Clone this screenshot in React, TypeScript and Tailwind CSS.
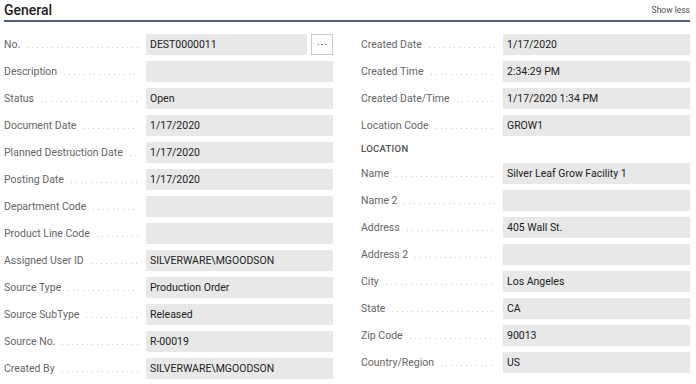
import React from "react";

type Field = { label: string; value?: string; more?: boolean };

const left: Field[] = [
  { label: "No.", value: "DEST0000011", more: true },
  { label: "Description" },
  { label: "Status", value: "Open" },
  { label: "Document Date", value: "1/17/2020" },
  { label: "Planned Destruction Date", value: "1/17/2020" },
  { label: "Posting Date", value: "1/17/2020" },
  { label: "Department Code" },
  { label: "Product Line Code" },
  { label: "Assigned User ID", value: "SILVERWARE\\MGOODSON" },
  { label: "Source Type", value: "Production Order" },
  { label: "Source SubType", value: "Released" },
  { label: "Source No.", value: "R-00019" },
  { label: "Created By", value: "SILVERWARE\\MGOODSON" },
];

const rightTop: Field[] = [
  { label: "Created Date", value: "1/17/2020" },
  { label: "Created Time", value: "2:34:29 PM" },
  { label: "Created Date/Time", value: "1/17/2020 1:34 PM" },
  { label: "Location Code", value: "GROW1" },
];

const rightBottom: Field[] = [
  { label: "Name", value: "Silver Leaf Grow Facility 1" },
  { label: "Name 2" },
  { label: "Address", value: "405 Wall St." },
  { label: "Address 2" },
  { label: "City", value: "Los Angeles" },
  { label: "State", value: "CA" },
  { label: "Zip Code", value: "90013" },
  { label: "Country/Region", value: "US" },
];

function Row({ f }: { f: Field }) {
  return (
    <div className="flex items-center h-[21px]">
      <div className="w-[142px] shrink-0 flex items-baseline pr-[8px] text-[10.5px] text-[#666666]">
        <span className="whitespace-nowrap">{f.label}</span>
        <span className="flex-1 ml-[7px] h-[1px] bg-[linear-gradient(to_right,#c4c4c4_1px,transparent_1px)] bg-[length:5px_1px] bg-repeat-x" />
      </div>
      <div className="flex-1 flex h-full gap-[4px]">
        <div className="flex-1 h-full bg-[#e8e8e8] flex items-center px-[4px] text-[10.5px] text-[#212121] whitespace-nowrap">
          {f.value}
        </div>
        {f.more && (
          <div className="w-[22px] h-full border border-[#c8c8c8] bg-white flex items-center justify-center gap-[2px]">
            <span className="w-[1.5px] h-[1.5px] bg-[#606060]" />
            <span className="w-[1.5px] h-[1.5px] bg-[#606060]" />
            <span className="w-[1.5px] h-[1.5px] bg-[#606060]" />
          </div>
        )}
      </div>
    </div>
  );
}

export default function App() {
  return (
    <div className="w-[696px] h-[384px] bg-white overflow-hidden font-['Roboto','Noto_Sans',sans-serif] pl-[4px] pr-[6px]">
      {/* header */}
      <div className="flex items-center justify-between h-[22px] border-b-[2px] border-[#505c78]">
        <span className="text-[14px] font-medium text-[#212121] leading-[16px]">General</span>
        <span className="text-[8.5px] text-[#505050] leading-[12px]">Show less</span>
      </div>

      <div className="flex gap-[28px] pt-[12px]">
        <div className="w-[329px] flex flex-col gap-[6px]">
          {left.map((f) => (
            <Row key={f.label} f={f} />
          ))}
        </div>
        <div className="w-[329px] flex flex-col gap-[6px]">
          {rightTop.map((f) => (
            <Row key={f.label} f={f} />
          ))}
          <div className="h-[15px] flex items-center text-[9.5px] font-medium tracking-[0.3px] text-[#505050]">
            LOCATION
          </div>
          {rightBottom.map((f) => (
            <Row key={f.label} f={f} />
          ))}
        </div>
      </div>
    </div>
  );
}
